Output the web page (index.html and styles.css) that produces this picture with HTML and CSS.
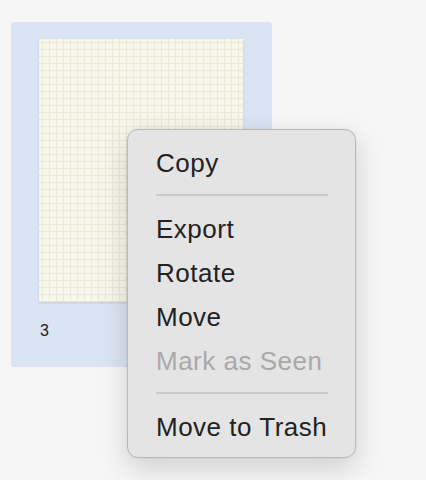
FILE: index.html
```html
<!DOCTYPE html>
<html>
<head>
<meta charset="utf-8">
<link rel="stylesheet" href="styles.css">
</head>
<body>
<div class="stage">
  <div class="card">
    <div class="paper"></div>
    <div class="label">3</div>
  </div>
  <div class="menu">
    <div class="item">Copy</div>
    <div class="sep"></div>
    <div class="item">Export</div>
    <div class="item">Rotate</div>
    <div class="item">Move</div>
    <div class="item disabled">Mark as Seen</div>
    <div class="sep"></div>
    <div class="item">Move to Trash</div>
  </div>
</div>
</body>
</html>
```

FILE: styles.css
```css
html, body {
  margin: 0;
  padding: 0;
  background: #f6f6f6;
  font-family: "Liberation Sans", Arial, sans-serif;
}
.stage {
  position: relative;
  width: 426px;
  height: 480px;
  padding: 22px 0 0 11px;
  box-sizing: border-box;
}
.card {
  width: 261px;
  height: 345px;
  box-sizing: border-box;
  background: #dbe4f3;
  border-radius: 3px;
  padding: 17px 29px 0 28px;
  display: flex;
  flex-direction: column;
}
.paper {
  width: 204px;
  height: 263px;
  background-color: #f7f7e9;
  background-image:
    linear-gradient(to right, #e9e9da 1px, transparent 1px),
    linear-gradient(to bottom, #e9e9da 1px, transparent 1px);
  background-size: 7px 7px;
  background-position: 3px 3px;
  box-shadow: 0 1px 2px rgba(0,0,0,0.12);
}
.label {
  margin-top: 20px;
  padding-left: 1px;
  font-size: 16px;
  line-height: 18px;
  color: #1e1e1e;
}
.menu {
  position: absolute;
  left: 127px;
  top: 129px;
  width: 229px;
  height: 329px;
  box-sizing: border-box;
  background: #e4e4e4;
  border: 1px solid #b9b9b9;
  border-radius: 11px;
  box-shadow: 0 10px 28px rgba(0,0,0,0.16), 0 0 3px rgba(0,0,0,0.06);
  padding: 11px 0 8px 0;
  display: flex;
  flex-direction: column;
}
.item {
  height: 44px;
  line-height: 44px;
  padding-left: 28px;
  font-size: 26px;
  letter-spacing: 0.5px;
  color: #222222;
  white-space: nowrap;
}
.item.disabled {
  color: #a9a9a9;
}
.sep {
  height: 2px;
  margin: 9px 27px 11px 28px;
  background: #cbcbcb;
}
```
